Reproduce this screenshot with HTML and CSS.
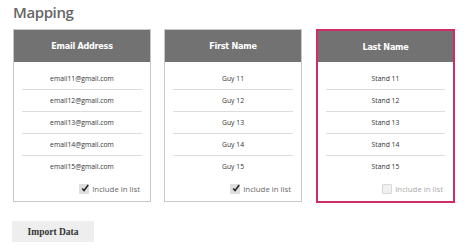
FILE: index.html
```html
<!DOCTYPE html>
<html>
<head>
<meta charset="utf-8">
<link rel="stylesheet" href="styles.css">
</head>
<body>
<div class="page">
  <h1 class="title">Mapping</h1>
  <div class="cards">
    <div class="card">
      <div class="card-head">Email Address</div>
      <ul class="rows">
        <li>email11@gmail.com</li>
        <li>email12@gmail.com</li>
        <li>email13@gmail.com</li>
        <li>email14@gmail.com</li>
        <li>email15@gmail.com</li>
      </ul>
      <div class="include">
        <span class="box checked"><svg viewBox="0 0 12 12" width="12" height="12"><path d="M1.8 6.6 L4.6 9.8 L10.8 1.6" fill="none" stroke="#222" stroke-width="2.2"/></svg></span>
        <span class="lbl">Include in list</span>
      </div>
    </div>
    <div class="card">
      <div class="card-head">First Name</div>
      <ul class="rows">
        <li>Guy 11</li>
        <li>Guy 12</li>
        <li>Guy 13</li>
        <li>Guy 14</li>
        <li>Guy 15</li>
      </ul>
      <div class="include">
        <span class="box checked"><svg viewBox="0 0 12 12" width="12" height="12"><path d="M1.8 6.6 L4.6 9.8 L10.8 1.6" fill="none" stroke="#222" stroke-width="2.2"/></svg></span>
        <span class="lbl">Include in list</span>
      </div>
    </div>
    <div class="card selected">
      <div class="card-head">Last Name</div>
      <ul class="rows">
        <li>Stand 11</li>
        <li>Stand 12</li>
        <li>Stand 13</li>
        <li>Stand 14</li>
        <li>Stand 15</li>
      </ul>
      <div class="include off">
        <span class="box"></span>
        <span class="lbl">Include in list</span>
      </div>
    </div>
  </div>
  <button class="import">Import Data</button>
</div>
</body>
</html>
```
FILE: styles.css
```css
html, body {
  margin: 0;
  padding: 0;
  background: #fff;
}
.page {
  padding: 0 0 0 13px;
  font-family: "Open Sans", "DejaVu Sans", sans-serif;
}
.title {
  margin: 0;
  height: 29px;
  font-size: 15px;
  line-height: 25px;
  font-weight: 600;
  letter-spacing: -0.4px;
  color: #666;
}
.cards {
  display: flex;
  gap: 13px;
}
.card {
  width: 136px;
  height: 171px;
  border: 1px solid #c8c8c8;
  display: flex;
  flex-direction: column;
}
.card.selected {
  width: 135px;
  height: 170px;
  border: 2px solid #cf2d66;
  margin-left: 1px;
}
.card-head {
  height: 32px;
  flex: none;
  background: #727272;
  color: #fff;
  font-family: "DejaVu Sans Condensed", "DejaVu Sans", sans-serif;
  font-stretch: condensed;
  font-weight: bold;
  font-size: 9px;
  letter-spacing: -0.25px;
  display: flex;
  align-items: center;
  justify-content: center;
}
.selected .card-head {
  height: 31px;
}
.rows {
  list-style: none;
  margin: 6px 8px 0;
  padding: 0;
}
.rows li {
  height: 21px;
  line-height: 22px;
  text-align: center;
  font-size: 6.8px;
  color: #333;
  border-bottom: 1px solid #dcdcdc;
}
.rows li:last-child {
  border-bottom: none;
  height: 22px;
}
.include {
  display: flex;
  justify-content: flex-end;
  align-items: center;
  gap: 3px;
  margin: 2px 10px 0;
  height: 18px;
}
.box {
  width: 10px;
  height: 10px;
  display: flex;
  align-items: flex-end;
  justify-content: center;
  background: #dedede;
  border-radius: 1px;
}
.box svg {
  margin-left: 2px;
}
.include.off .box {
  background: #f0f0f0;
  border: 1px solid #d8d8d8;
  width: 8px;
  height: 8px;
}
.lbl {
  font-size: 7.8px;
  color: #666;
}
.include.off .lbl {
  color: #aaa;
}
.import {
  margin-top: 18px;
  margin-left: -1px;
  width: 82px;
  height: 21px;
  border: none;
  background: #eeeeee;
  font-family: "Liberation Serif", "DejaVu Serif", serif;
  font-weight: bold;
  font-size: 9.5px;
  color: #333;
  padding: 0;
}
```
